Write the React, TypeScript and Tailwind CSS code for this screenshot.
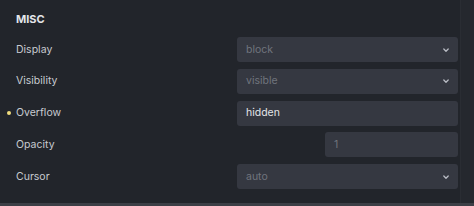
import React from "react";

function Chevron() {
  return (
    <svg width="8" height="8" viewBox="0 0 8 8" fill="none" className="text-[#b9bcc4]">
      <path d="M1.8 3 L4 5.2 L6.2 3" stroke="currentColor" strokeWidth="1.3" strokeLinecap="round" strokeLinejoin="round" />
    </svg>
  );
}

const rows = [
  { label: "Display", value: "block", kind: "select" },
  { label: "Visibility", value: "visible", kind: "select" },
  { label: "Overflow", value: "hidden", kind: "input", active: true },
  { label: "Opacity", value: "1", kind: "short" },
  { label: "Cursor", value: "auto", kind: "select" },
];

export default function App() {
  return (
    <div className="w-[474px] h-[206px] bg-[#25282e] flex flex-col font-['Inter',sans-serif] overflow-hidden">
      <div className="flex flex-1">
        <div className="w-[461px] bg-[#22252b] border-r border-[#2a2d33] pt-[12px]">
          <div className="pl-[16px] h-[15px] text-[11px] font-bold text-[#e4e6ea] leading-[15px]">MISC</div>
          <div className="flex flex-col gap-[6.75px] pt-[10px]">
            {rows.map((r) => (
              <div key={r.label} className="flex items-center h-[25px]">
                <div className="w-[238px] pl-[16px] relative text-[10.5px] text-[#c7cad0]">
                  {r.active && (
                    <span className="absolute left-[6.5px] top-1/2 -translate-y-1/2 w-[4px] h-[4px] rounded-full bg-[#f0dc7e]" />
                  )}
                  {r.label}
                </div>
                <div className="flex-1 flex justify-end pr-[2px]">
                  <div
                    className={`h-[25px] rounded-[3px] bg-[#353841] flex items-center pl-[9px] pr-[8px] text-[10.5px] ${
                      r.kind === "short" ? "w-[133px]" : "w-[221px]"
                    } ${r.active ? "text-[#e2e4e8]" : "text-[#70747d]"}`}
                  >
                    <span className="flex-1">{r.value}</span>
                    {r.kind === "select" && <Chevron />}
                  </div>
                </div>
              </div>
            ))}
          </div>
        </div>
      </div>
      <div className="h-[3px] bg-[#3c3f46]" />
    </div>
  );
}
